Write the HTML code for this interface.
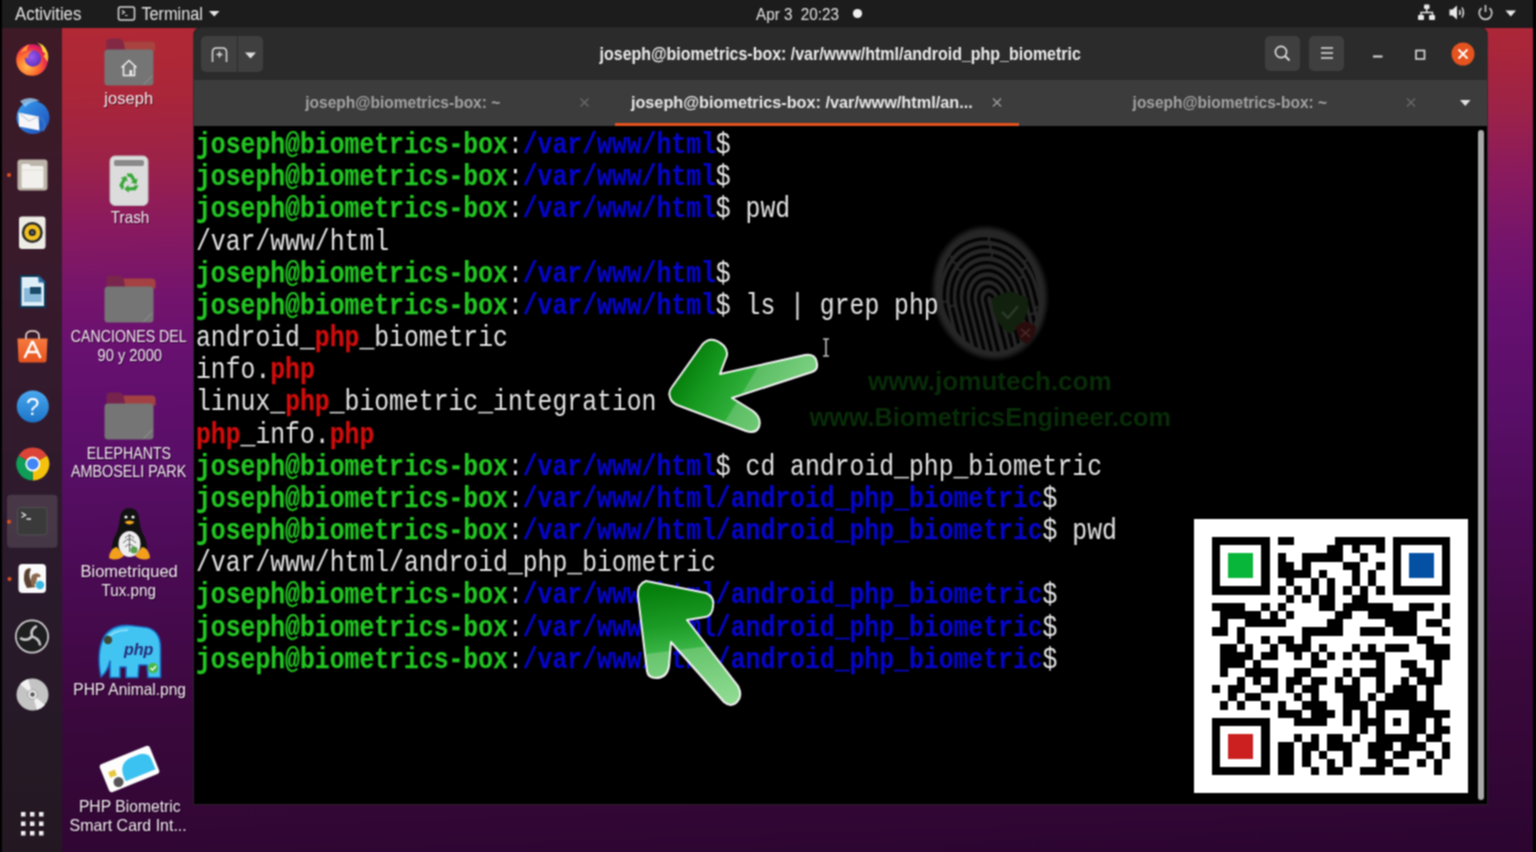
<!DOCTYPE html>
<html><head><meta charset="utf-8">
<style>
*{margin:0;padding:0;box-sizing:border-box}
html,body{width:1536px;height:852px;overflow:hidden;background:#000}
body{position:relative;font-family:"Liberation Sans",sans-serif}
.abs{position:absolute}
svg{position:absolute;overflow:visible}
#wall{position:absolute;left:2px;top:0;width:1531px;height:852px;
 background:linear-gradient(178deg,#b42a32 0%,#aa2639 11%,#9c2248 18%,#8a1a5e 25%,#74146c 33%,#661070 40%,#580e66 52%,#480a50 66%,#3a083c 80%,#2c0530 100%)}
#top{position:absolute;left:2px;top:0;width:1531px;height:28px;background:#1c1c1c}
#dock{position:absolute;left:2px;top:28px;width:60px;height:824px;background:linear-gradient(180deg,#3e1a26 0%,#361a2c 35%,#2a1a2c 65%,#231822 100%)}
#win{position:absolute;left:194px;top:28px;width:1293px;height:776px;background:#000;border-radius:7px 7px 0 0;overflow:hidden;box-shadow:0 0 0 1px rgba(40,40,40,.8)}
#hdr{position:absolute;left:0;top:0;width:100%;height:52px;background:#2b2b2b}
#tabs{position:absolute;left:0;top:52px;width:100%;height:46px;background:#3c3c3c}
#term{position:absolute;left:0;top:98px;width:100%;height:678px;background:#000;overflow:hidden}
.ln{position:absolute;left:2px;white-space:pre;font-family:"Liberation Mono",monospace;font-size:30px;transform:scaleX(0.825);transform-origin:0 0;color:#e4e4e4;line-height:32px}
.g{color:#22c422;font-weight:bold;-webkit-text-stroke:0.25px #22c422}
.b{color:#0505c8;font-weight:bold;-webkit-text-stroke:0.25px #0505c8}
.r{color:#d00c0c;font-weight:bold;-webkit-text-stroke:0.25px #d00c0c}
.btn{position:absolute;background:#3f3f3f;border-radius:5px}
</style></head><body>
<svg width="0" height="0" style="position:absolute"><filter id="softb" x="0" y="0" width="100%" height="100%" color-interpolation-filters="sRGB"><feConvolveMatrix order="3" kernelMatrix="1 2 1 2 4 2 1 2 1" divisor="16" edgeMode="duplicate"/></filter></svg>
<div id="root" style="position:absolute;left:0;top:0;width:1536px;height:852px;filter:url(#softb)">
<div id="wall"></div>
<div id="top"></div>
<div id="dock"></div>
<div id="win">
  <div id="hdr">
    <div class="btn" style="left:7px;top:8px;width:36px;height:36px;border-radius:5px 0 0 5px"></div>
    <div class="btn" style="left:44px;top:8px;width:25px;height:36px;border-radius:0 5px 5px 0"></div>
    <div class="btn" style="left:1071px;top:8px;width:35px;height:35px"></div>
    <div class="btn" style="left:1115px;top:8px;width:35px;height:35px"></div>
  </div>
  <div id="tabs">
    <div class="abs" style="left:421px;top:43px;width:404px;height:3px;background:#e5531f"></div>
  </div>
  <div id="term">
    <svg style="left:0;top:0" width="1293" height="678"><g transform="translate(-194 -126)"><defs><filter id="fpb" x="-20%" y="-20%" width="140%" height="140%"><feGaussianBlur stdDeviation="2"/></filter><clipPath id="fpc"><ellipse cx="990" cy="293" rx="48" ry="59" transform="rotate(-14 990 293)"/></clipPath></defs><ellipse cx="990" cy="293" rx="56" ry="66" transform="rotate(-14 990 293)" fill="#262626" filter="url(#fpb)"/><g clip-path="url(#fpc)"><g transform="rotate(-14 990 293)" stroke="#040404" stroke-width="3.4" fill="none" stroke-linecap="round"><path d="M984.0 370.0 L984.0 300.0 A4.0 6.0 0 0 1 992.0 300.0 L992.0 370.0"/><path d="M977.2 370.0 L977.2 300.0 A10.8 14.0 0 0 1 998.8 300.0 L998.8 370.0"/><path d="M970.4 370.0 L970.4 300.0 A17.6 22.0 0 0 1 1005.6 300.0 L1005.6 370.0"/><path d="M963.6 370.0 L963.6 300.0 A24.4 30.0 0 0 1 1012.4 300.0 L1012.4 370.0"/><path d="M956.8 370.0 L956.8 300.0 A31.2 38.0 0 0 1 1019.2 300.0 L1019.2 370.0"/><path d="M950.0 370.0 L950.0 300.0 A38.0 46.0 0 0 1 1026.0 300.0 L1026.0 370.0" stroke-dasharray="33 5"/><path d="M943.2 370.0 L943.2 300.0 A44.8 54.0 0 0 1 1032.8 300.0 L1032.8 370.0" stroke-dasharray="36 5"/><path d="M936.4 370.0 L936.4 300.0 A51.6 62.0 0 0 1 1039.6 300.0 L1039.6 370.0" stroke-dasharray="39 5"/></g></g><path d="M992 298 L1010 291 L1028 298 Q1030 322 1010 334 Q992 322 992 298z" fill="#12200e"/><path d="M1002 312l6 6 10-12" stroke="#2a3a28" stroke-width="2.5" fill="none"/><path d="M1016 326 L1026 321 L1036 326 Q1036 338 1026 344 Q1016 338 1016 326z" fill="#2a0c0c"/><path d="M1021 329l9 8M1030 329l-9 8" stroke="#4a2a2a" stroke-width="1.6"/></g></svg>
    <div class="ln" style="top:3.00px"><span class="g">joseph@biometrics-box</span>:<span class="b">/var/www/html</span>$</div><div class="ln" style="top:35.17px"><span class="g">joseph@biometrics-box</span>:<span class="b">/var/www/html</span>$</div><div class="ln" style="top:67.34px"><span class="g">joseph@biometrics-box</span>:<span class="b">/var/www/html</span>$ pwd</div><div class="ln" style="top:99.51px">/var/www/html</div><div class="ln" style="top:131.68px"><span class="g">joseph@biometrics-box</span>:<span class="b">/var/www/html</span>$</div><div class="ln" style="top:163.85px"><span class="g">joseph@biometrics-box</span>:<span class="b">/var/www/html</span>$ ls | grep php</div><div class="ln" style="top:196.02px">android_<span class="r">php</span>_biometric</div><div class="ln" style="top:228.19px">info.<span class="r">php</span></div><div class="ln" style="top:260.36px">linux_<span class="r">php</span>_biometric_integration</div><div class="ln" style="top:292.53px"><span class="r">php</span>_info.<span class="r">php</span></div><div class="ln" style="top:324.70px"><span class="g">joseph@biometrics-box</span>:<span class="b">/var/www/html</span>$ cd android_php_biometric</div><div class="ln" style="top:356.87px"><span class="g">joseph@biometrics-box</span>:<span class="b">/var/www/html/android_php_biometric</span>$</div><div class="ln" style="top:389.04px"><span class="g">joseph@biometrics-box</span>:<span class="b">/var/www/html/android_php_biometric</span>$ pwd</div><div class="ln" style="top:421.21px">/var/www/html/android_php_biometric</div><div class="ln" style="top:453.38px"><span class="g">joseph@biometrics-box</span>:<span class="b">/var/www/html/android_php_biometric</span>$</div><div class="ln" style="top:485.55px"><span class="g">joseph@biometrics-box</span>:<span class="b">/var/www/html/android_php_biometric</span>$</div><div class="ln" style="top:517.72px"><span class="g">joseph@biometrics-box</span>:<span class="b">/var/www/html/android_php_biometric</span>$</div>
    <div class="abs" style="left:1284px;top:4px;width:6px;height:670px;border-radius:3px;background:#a8a8a8"></div>
  </div>
</div>
<svg style="left:0;top:0" width="1536" height="852" viewBox="0 0 1536 852">
<defs>
 <linearGradient id="ag1" x1="0" y1="1" x2="1" y2="0"><stop offset="0" stop-color="#0a8a12"/><stop offset="0.55" stop-color="#2aa838"/><stop offset="0.56" stop-color="#6cc878"/><stop offset="1" stop-color="#8ad890"/></linearGradient>
</defs>
<!-- topbar icons -->
<rect x="118.5" y="7" width="16" height="13" rx="2" fill="none" stroke="#d8d8d8" stroke-width="1.5"/>
<path d="M122 10.5l2.5 1.8-2.5 1.8M125 15.5h2.5" stroke="#d8d8d8" stroke-width="1.2" fill="none"/>
<path d="M209 11h10.5l-5.25 5.5z" fill="#e6e6e6"/>
<circle cx="857.5" cy="13.5" r="4.6" fill="#f0f0f0"/>
<rect x="1424" y="4.5" width="5.5" height="4.5" rx="1" fill="#e8e8e8"/><rect x="1418" y="15" width="6" height="5" rx="1" fill="#e8e8e8"/><rect x="1429" y="15" width="6" height="5" rx="1" fill="#e8e8e8"/><path d="M1426.7 9v3.5M1421 15v-2.5h11.5V15" stroke="#e8e8e8" stroke-width="1.4" fill="none"/>
<path d="M1449.5 9.5h3l4.5-4v14l-4.5-4h-3z" fill="#e8e8e8"/><path d="M1459.5 10q1.3 2.5 0 5M1462 7.5q2.8 5 0 10" stroke="#e8e8e8" stroke-width="1.4" fill="none"/>
<path d="M1481.5 8.2a6.3 6.3 0 1 0 8 0" stroke="#d0d0d0" stroke-width="1.6" fill="none"/><path d="M1485.5 5v7" stroke="#d0d0d0" stroke-width="1.6"/>
<path d="M1505.5 10.5h10.5l-5.25 6z" fill="#e8e8e8"/>
<!-- header icons -->
<path d="M212.5 62V52q0-4 4-4h6q4 0 4 4v10" stroke="#dcdcdc" stroke-width="1.5" fill="none"/><path d="M219.5 51.5v6M216.5 54.5h6" stroke="#dcdcdc" stroke-width="1.5"/>
<path d="M245 52.5h11l-5.5 6z" fill="#e0e0e0"/>
<circle cx="1281" cy="52" r="5.6" stroke="#e0e0e0" stroke-width="1.6" fill="none"/><path d="M1285 56l4.5 4.5" stroke="#e0e0e0" stroke-width="1.8"/>
<path d="M1321 48h12M1321 53h12M1321 58h12" stroke="#e0e0e0" stroke-width="1.7"/>
<path d="M1373 56.5h9.5" stroke="#dcdcdc" stroke-width="2"/>
<rect x="1416" y="50.5" width="8.5" height="8.5" fill="none" stroke="#dcdcdc" stroke-width="1.6"/>
<circle cx="1463" cy="54" r="11.5" fill="#e5531f"/>
<path d="M1458.5 49.5l9 9M1467.5 49.5l-9 9" stroke="#fff" stroke-width="1.8"/>
<!-- tab x -->
<path d="M580.5 98.5l8 8M588.5 98.5l-8 8" stroke="#6a6a6a" stroke-width="1.3"/>
<path d="M993 98.5l8 8M1001 98.5l-8 8" stroke="#a0a0a0" stroke-width="1.3"/>
<path d="M1407 98.5l8 8M1415 98.5l-8 8" stroke="#6a6a6a" stroke-width="1.3"/>
<path d="M1460 100h10.5l-5.25 6z" fill="#e0e0e0"/>

<defs>
 <radialGradient id="ffg" cx="0.35" cy="0.7" r="0.8"><stop offset="0" stop-color="#ffbd4f"/><stop offset="0.45" stop-color="#ff6a2a"/><stop offset="0.8" stop-color="#e3205a"/><stop offset="1" stop-color="#c0146e"/></radialGradient>
 <radialGradient id="ffp" cx="0.4" cy="0.4" r="0.7"><stop offset="0" stop-color="#9a5cf0"/><stop offset="1" stop-color="#5a2ab8"/></radialGradient>
 <linearGradient id="tbg" x1="0" y1="0" x2="1" y2="1"><stop offset="0" stop-color="#3aa0f0"/><stop offset="1" stop-color="#1a4ab8"/></linearGradient>
 <linearGradient id="swg" x1="0" y1="0" x2="0" y2="1"><stop offset="0" stop-color="#f6793e"/><stop offset="1" stop-color="#e5531f"/></linearGradient>
 <linearGradient id="hlp" x1="0" y1="0" x2="0" y2="1"><stop offset="0" stop-color="#4aa8ee"/><stop offset="1" stop-color="#1c74c8"/></linearGradient>
 <radialGradient id="dvd" cx="0.5" cy="0.5" r="0.5"><stop offset="0" stop-color="#f4f4f4"/><stop offset="0.5" stop-color="#c8c8c8"/><stop offset="0.8" stop-color="#e0e0e0"/><stop offset="1" stop-color="#9a9a9a"/></radialGradient>
</defs>
<!-- firefox -->
<circle cx="32" cy="60" r="15.8" fill="url(#ffg)"/>
<path d="M37 42.5q11 3 11.5 16q-2-5-6-7q0-5-5.5-9z" fill="#ffd23a"/>
<path d="M46.5 52q2.5 5 1 10l-4-6z" fill="#ffb43a"/>
<circle cx="33" cy="58.5" r="8.2" fill="url(#ffp)"/>
<path d="M20.5 53q3-7 9-8.5q-3 3-2.5 6q-3 0-6.5 2.5z" fill="#ff9a2e"/>
<path d="M23 57q3-6 10-6.5q-5 2.5-5 8z" fill="#ff7a30" opacity="0.9"/>
<!-- thunderbird -->
<circle cx="33" cy="117.5" r="16.5" fill="url(#tbg)"/>
<path d="M20 101q10-6 20 0q-9-1-15 6z" fill="#9ad0f8" opacity="0.8"/>
<path d="M18.5 112.5 L38.5 116.5 L39.5 130.5 L19 126.5z" fill="#f6f6f8"/>
<path d="M19 113l10 8 9.5-4.5" stroke="#c8ccd4" stroke-width="1.1" fill="none"/>
<path d="M39.5 117 q8 6 3 14" stroke="#3a78c8" stroke-width="3" fill="none" opacity="0.7"/>
<!-- files -->
<rect x="17.5" y="159.5" width="30" height="31" rx="3" fill="#bcb5aa"/>
<path d="M21.5 168v-2.5q0-1.5 1.5-1.5h6l2 2h11q1.5 0 1.5 1.5v19q0 1.5-1.5 1.5h-19q-1.5 0-1.5-1.5z" fill="#f2f0ec"/>
<path d="M21.5 170h22" stroke="#e0ddd6" stroke-width="1"/>
<circle cx="9" cy="175" r="2" fill="#e5531f"/>
<!-- rhythmbox -->
<rect x="19" y="216.5" width="26.5" height="32.5" rx="3" fill="#ecebe4"/>
<circle cx="32.3" cy="232.5" r="10.5" fill="#2a2a2a"/>
<circle cx="32.3" cy="232.5" r="8" fill="#f0c020"/>
<circle cx="32.3" cy="232.5" r="3.6" fill="#2a2a2a"/>
<circle cx="32.3" cy="232.5" r="1.2" fill="#777"/>
<!-- libreoffice -->
<path d="M19.5 275h19l7.5 7.5V308h-26.5z" fill="#0a3a5a"/>
<path d="M21.5 277h16l6.5 6.5V306h-22.5z" fill="#ddeef8"/>
<rect x="24" y="288" width="17.5" height="14" fill="#8ab8d8"/>
<rect x="30" y="287" width="11" height="7" fill="#1a4a6a"/>
<path d="M38.5 275l7.5 7.5h-7.5z" fill="#2a6aa0"/>
<!-- software -->
<path d="M17.5 338.5h30l-1 21.5q0 2.5-2.5 2.5h-23q-2.5 0-2.5-2.5z" fill="url(#swg)"/>
<path d="M26 339v-3q0-5 6.5-5t6.5 5v3" stroke="#f2dcd0" stroke-width="1.6" fill="none"/>
<path d="M32.5 341l-8 17M32.5 341l8 17M26.5 352h12" stroke="#fff" stroke-width="2.4" fill="none"/>
<!-- help -->
<circle cx="32.8" cy="406.4" r="16" fill="url(#hlp)"/>
<text x="32.8" y="415" text-anchor="middle" font-family="Liberation Sans" font-size="24" fill="#fff">?</text>
<!-- chrome -->
<path d="M32.8 464L18.51 455.75A16.5 16.5 0 0 1 47.09 455.75z" fill="#db4437"/><path d="M32.8 464L47.09 455.75A16.5 16.5 0 0 1 32.80 480.50z" fill="#f4c20d"/><path d="M32.8 464L32.80 480.50A16.5 16.5 0 0 1 18.51 455.75z" fill="#0f9d58"/><circle cx="32.8" cy="464" r="7.4" fill="#fff"/><circle cx="32.8" cy="464" r="5.8" fill="#4285f4"/>
<!-- terminal (active) -->
<rect x="7" y="494.7" width="50.5" height="53" rx="4" fill="rgba(255,255,255,0.13)"/>
<rect x="17.5" y="507.5" width="29.5" height="27.5" rx="3" fill="#3a3a3a" stroke="#555" stroke-width="0.8"/>
<path d="M21.5 512.5l4 2.5-4 2.5M26.5 519h4.5" stroke="#e8e8e8" stroke-width="1.4" fill="none"/>
<circle cx="9" cy="521.7" r="2" fill="#e5531f"/>
<!-- squirrel app -->
<rect x="18.5" y="564" width="27.5" height="29" rx="4" fill="#fafafa"/>
<path d="M27 588q-5-8-2-17q3-4 6-2q-3 6 0 12q2 4 5 6z" fill="#5a4030"/>
<path d="M32 575q6-4 9 1q-2 2-4 1q0 6-4 10q-4-4-1-12z" fill="#8a6a50"/>
<circle cx="40" cy="585" r="4.2" fill="#3ab8e0"/>
<circle cx="9.5" cy="579" r="2" fill="#e5531f"/>
<!-- obs -->
<circle cx="32" cy="636.5" r="17" fill="#d0d0d0"/>
<circle cx="32" cy="636.5" r="15.3" fill="#1e1d20"/>
<g stroke="#c8c8c8" stroke-width="2.6" fill="none" stroke-linecap="round">
<path d="M32 636.5 q-2-7 4-10"/>
<path d="M32 636.5 q7 2 8 8"/>
<path d="M32 636.5 q-5 5-11 2"/>
</g>
<!-- dvd -->
<circle cx="32.5" cy="694.5" r="16" fill="#c4c4c4"/>
<path d="M32.5 694.5 L20 684 A16 16 0 0 1 28 679 z M32.5 694.5 L45 705 A16 16 0 0 1 37 710z" fill="#f2f2f2"/>
<circle cx="32.5" cy="694.5" r="4.8" fill="#eee" stroke="#999" stroke-width="1"/>
<circle cx="32.5" cy="694.5" r="2.2" fill="#555"/>
<!-- grid -->
<g fill="#f0f0f0">
<rect x="21" y="812" width="4.5" height="4.5"/><rect x="30" y="812" width="4.5" height="4.5"/><rect x="39" y="812" width="4.5" height="4.5"/>
<rect x="21" y="821.5" width="4.5" height="4.5"/><rect x="30" y="821.5" width="4.5" height="4.5"/><rect x="39" y="821.5" width="4.5" height="4.5"/>
<rect x="21" y="831" width="4.5" height="4.5"/><rect x="30" y="831" width="4.5" height="4.5"/><rect x="39" y="831" width="4.5" height="4.5"/>
</g>

<path d="M106.4 42.6q0-4 4-4h10l3 3h28q4 0 4 4v6h-49z" fill="#7a2848" opacity="0.85"/>
<path d="M123.4 41.6h28q4 0 4 4v6h-30z" fill="#c85a3a" opacity="0.55"/>
<rect x="104.4" y="49.6" width="49" height="36" rx="3.5" fill="#757575"/>
<path d="M143.4 84.6l9 -9" stroke="#8a8a8a" stroke-width="1.2"/>
<path d="M121.5 67.5l7.5-7 7.5 7M123.5 66v9.5h11V66" stroke="#eee" stroke-width="1.6" fill="none"/><rect x="129.5" y="70" width="2.6" height="5.5" fill="#eee"/>
<!-- trash -->
<rect x="110" y="156" width="38" height="49.5" rx="5" fill="#dcdcdc"/>
<rect x="110" y="156" width="38" height="49.5" rx="5" fill="none" stroke="#bdbdbd" stroke-width="1"/>
<rect x="114" y="160" width="30" height="6" rx="2" fill="#8a8a8a"/>
<g transform="translate(129 183)" fill="#38a838"><path d="M-2.5 -9.5 L3 -9.5 L6.5 -3.5 L8.5 -4.8 L7.5 1.2 L1.8 -0.5 L3.8 -1.7 L1.2 -6 L-0.8 -6 z"/><g transform="rotate(120)"><path d="M-2.5 -9.5 L3 -9.5 L6.5 -3.5 L8.5 -4.8 L7.5 1.2 L1.8 -0.5 L3.8 -1.7 L1.2 -6 L-0.8 -6 z"/></g><g transform="rotate(240)"><path d="M-2.5 -9.5 L3 -9.5 L6.5 -3.5 L8.5 -4.8 L7.5 1.2 L1.8 -0.5 L3.8 -1.7 L1.2 -6 L-0.8 -6 z"/></g></g>
<path d="M106.5 279.6q0-4 4-4h10l3 3h28q4 0 4 4v6h-49z" fill="#7a2848" opacity="0.85"/>
<path d="M123.5 278.6h28q4 0 4 4v6h-30z" fill="#c85a3a" opacity="0.55"/>
<rect x="104.5" y="286.6" width="49" height="36" rx="3.5" fill="#757575"/>
<path d="M143.5 321.6l9 -9" stroke="#8a8a8a" stroke-width="1.2"/><path d="M106.5 396.5q0-4 4-4h10l3 3h28q4 0 4 4v6h-49z" fill="#7a2848" opacity="0.85"/>
<path d="M123.5 395.5h28q4 0 4 4v6h-30z" fill="#c85a3a" opacity="0.55"/>
<rect x="104.5" y="403.5" width="49" height="36" rx="3.5" fill="#757575"/>
<path d="M143.5 438.5l9 -9" stroke="#8a8a8a" stroke-width="1.2"/>
<!-- tux -->
<path d="M129.5 508 Q121 508 120 518 Q119 526 117 532 Q111 542 112 552 L147 552 Q148 542 142 532 Q140 526 139 518 Q138 508 129.5 508z" fill="#111"/>
<ellipse cx="129.5" cy="544" rx="11" ry="13" fill="#eeeeee"/>
<circle cx="126" cy="517" r="1.6" fill="#fff"/><circle cx="133" cy="517" r="1.6" fill="#fff"/>
<path d="M124.5 522 Q129.5 519 134.5 522 Q129.5 527 124.5 522z" fill="#f2a81c"/>
<path d="M109 558 Q110 548 117 547 L124 556 Q116 562 109 558z" fill="#f2a01c"/>
<path d="M150 558 Q149 548 142 547 L135 556 Q143 562 150 558z" fill="#f2a01c"/>
<g stroke="#555" stroke-width="0.9" fill="none"><path d="M125 538q4.5-5 9 0"/><path d="M123 543q6.5-8 13 0"/><path d="M125 547q4.5-5 9 0"/><path d="M129.5 534v18"/></g>
<circle cx="134" cy="550" r="3.6" fill="#58a050"/>
<!-- php elephant -->
<path d="M101 677 Q96 652 104 637 Q112 624 130 625.5 L147 627.5 Q160.5 631 160.5 648 L160.5 677.5 L148 677.5 L147 665 L139 665 L138 677.5 L126 677.5 L126 667 L120 667 L120 677.5 L110 677.5 L110 661 Q108 671 101 677z" fill="#42c4f2" stroke="#1a68c0" stroke-width="1.6" stroke-linejoin="round"/>
<path d="M106 640 Q112 630 128 630" stroke="#a8e8ff" stroke-width="2" fill="none" opacity="0.7"/>
<text x="124" y="655" font-family="Liberation Sans" font-size="16" font-weight="bold" font-style="italic" fill="#262a78">php</text>
<circle cx="108" cy="640" r="4.2" fill="#3e4a38"/>
<circle cx="153" cy="668" r="5.2" fill="#4ab848"/>
<path d="M150.5 668l2 2 3.5-4" stroke="#fff" stroke-width="1.3" fill="none"/>
<!-- smart card -->
<g transform="translate(129.5 769) rotate(-22)">
<rect x="-27" y="-15" width="54" height="30" rx="3" fill="#fdfdfd"/>
<rect x="-21" y="-5" width="7" height="6" fill="#e6c840"/>
<circle cx="-15" cy="8" r="5" fill="#555"/>
<path d="M-8 10q-2-18 12-20h10q10 1 10 10v10h-32z" fill="#3cc2f0"/>
</g>

<text x="15" y="20" textLength="66.4" lengthAdjust="spacingAndGlyphs" font-family="Liberation Sans" font-size="18" font-weight="normal" fill="#e4e4e4" >Activities</text><text x="141.4" y="20" textLength="61.6" lengthAdjust="spacingAndGlyphs" font-family="Liberation Sans" font-size="18" font-weight="normal" fill="#e4e4e4" >Terminal</text><text x="756" y="19.5" textLength="83" lengthAdjust="spacingAndGlyphs" font-family="Liberation Sans" font-size="17" font-weight="normal" fill="#e4e4e4" xml:space="preserve">Apr 3  20:23</text><text x="599.6" y="60" textLength="481.2" lengthAdjust="spacingAndGlyphs" font-family="Liberation Sans" font-size="17.5" font-weight="bold" fill="#ececec" >joseph@biometrics-box: /var/www/html/android_php_biometric</text><text x="305.3" y="108.4" textLength="195" lengthAdjust="spacingAndGlyphs" font-family="Liberation Sans" font-size="17" font-weight="bold" fill="#a3a3a3" >joseph@biometrics-box: ~</text><text x="630.9" y="108.4" textLength="341.8" lengthAdjust="spacingAndGlyphs" font-family="Liberation Sans" font-size="17" font-weight="bold" fill="#e8e8e8" >joseph@biometrics-box: /var/www/html/an...</text><text x="1132.6" y="108.4" textLength="194.4" lengthAdjust="spacingAndGlyphs" font-family="Liberation Sans" font-size="17" font-weight="bold" fill="#a3a3a3" >joseph@biometrics-box: ~</text><text x="105.3" y="105.4" textLength="48.8" lengthAdjust="spacingAndGlyphs" font-family="Liberation Sans" font-size="16.5" font-weight="normal" fill="rgba(0,0,0,0.55)" >joseph</text><text x="104.3" y="104.4" textLength="48.8" lengthAdjust="spacingAndGlyphs" font-family="Liberation Sans" font-size="16.5" font-weight="normal" fill="#f4ecf2" >joseph</text><text x="111.8" y="224.3" textLength="38.60000000000001" lengthAdjust="spacingAndGlyphs" font-family="Liberation Sans" font-size="16.5" font-weight="normal" fill="rgba(0,0,0,0.55)" >Trash</text><text x="110.8" y="223.3" textLength="38.60000000000001" lengthAdjust="spacingAndGlyphs" font-family="Liberation Sans" font-size="16.5" font-weight="normal" fill="#f4ecf2" >Trash</text><text x="71.8" y="342.5" textLength="115.89999999999999" lengthAdjust="spacingAndGlyphs" font-family="Liberation Sans" font-size="16.5" font-weight="normal" fill="rgba(0,0,0,0.55)" >CANCIONES DEL</text><text x="70.8" y="341.5" textLength="115.89999999999999" lengthAdjust="spacingAndGlyphs" font-family="Liberation Sans" font-size="16.5" font-weight="normal" fill="#f4ecf2" >CANCIONES DEL</text><text x="98.5" y="361.5" textLength="64.5" lengthAdjust="spacingAndGlyphs" font-family="Liberation Sans" font-size="16.5" font-weight="normal" fill="rgba(0,0,0,0.55)" >90 y 2000</text><text x="97.5" y="360.5" textLength="64.5" lengthAdjust="spacingAndGlyphs" font-family="Liberation Sans" font-size="16.5" font-weight="normal" fill="#f4ecf2" >90 y 2000</text><text x="87.8" y="459.5" textLength="84.2" lengthAdjust="spacingAndGlyphs" font-family="Liberation Sans" font-size="16.5" font-weight="normal" fill="rgba(0,0,0,0.55)" >ELEPHANTS</text><text x="86.8" y="458.5" textLength="84.2" lengthAdjust="spacingAndGlyphs" font-family="Liberation Sans" font-size="16.5" font-weight="normal" fill="#f4ecf2" >ELEPHANTS</text><text x="71.9" y="478" textLength="115.4" lengthAdjust="spacingAndGlyphs" font-family="Liberation Sans" font-size="16.5" font-weight="normal" fill="rgba(0,0,0,0.55)" >AMBOSELI PARK</text><text x="70.9" y="477" textLength="115.4" lengthAdjust="spacingAndGlyphs" font-family="Liberation Sans" font-size="16.5" font-weight="normal" fill="#f4ecf2" >AMBOSELI PARK</text><text x="81.5" y="578" textLength="97.30000000000001" lengthAdjust="spacingAndGlyphs" font-family="Liberation Sans" font-size="16.5" font-weight="normal" fill="rgba(0,0,0,0.55)" >Biometriqued</text><text x="80.5" y="577" textLength="97.30000000000001" lengthAdjust="spacingAndGlyphs" font-family="Liberation Sans" font-size="16.5" font-weight="normal" fill="#f4ecf2" >Biometriqued</text><text x="102.5" y="596.5" textLength="54.5" lengthAdjust="spacingAndGlyphs" font-family="Liberation Sans" font-size="16.5" font-weight="normal" fill="rgba(0,0,0,0.55)" >Tux.png</text><text x="101.5" y="595.5" textLength="54.5" lengthAdjust="spacingAndGlyphs" font-family="Liberation Sans" font-size="16.5" font-weight="normal" fill="#f4ecf2" >Tux.png</text><text x="74.3" y="695.6" textLength="112.60000000000001" lengthAdjust="spacingAndGlyphs" font-family="Liberation Sans" font-size="16.5" font-weight="normal" fill="rgba(0,0,0,0.55)" >PHP Animal.png</text><text x="73.3" y="694.6" textLength="112.60000000000001" lengthAdjust="spacingAndGlyphs" font-family="Liberation Sans" font-size="16.5" font-weight="normal" fill="#f4ecf2" >PHP Animal.png</text><text x="79.9" y="813" textLength="101.69999999999999" lengthAdjust="spacingAndGlyphs" font-family="Liberation Sans" font-size="16.5" font-weight="normal" fill="rgba(0,0,0,0.55)" >PHP Biometric</text><text x="78.9" y="812" textLength="101.69999999999999" lengthAdjust="spacingAndGlyphs" font-family="Liberation Sans" font-size="16.5" font-weight="normal" fill="#f4ecf2" >PHP Biometric</text><text x="70.6" y="831.9" textLength="117.1" lengthAdjust="spacingAndGlyphs" font-family="Liberation Sans" font-size="16.5" font-weight="normal" fill="rgba(0,0,0,0.55)" >Smart Card Int...</text><text x="69.6" y="830.9" textLength="117.1" lengthAdjust="spacingAndGlyphs" font-family="Liberation Sans" font-size="16.5" font-weight="normal" fill="#f4ecf2" >Smart Card Int...</text><text x="868" y="390.2" textLength="243.7" lengthAdjust="spacingAndGlyphs" font-family="Liberation Sans" font-size="25" font-weight="bold" fill="#082c08" >www.jomutech.com</text><text x="809.4" y="425.6" textLength="361.6" lengthAdjust="spacingAndGlyphs" font-family="Liberation Sans" font-size="25" font-weight="bold" fill="#082c08" >www.BiometricsEngineer.com</text>
<path d="M823 339h6M826 339v17M823 356h6" stroke="#bbb" stroke-width="1.6" fill="none"/>

<defs>
 <linearGradient id="ga1" gradientUnits="userSpaceOnUse" x1="680" y1="375" x2="800" y2="448"><stop offset="0" stop-color="#067f0c"/><stop offset="0.2" stop-color="#179a20"/><stop offset="0.44" stop-color="#2fae3a"/><stop offset="0.45" stop-color="#5abd62"/><stop offset="1" stop-color="#8fdb92"/></linearGradient>
 <linearGradient id="ga2" gradientUnits="userSpaceOnUse" x1="650" y1="590" x2="665" y2="709"><stop offset="0" stop-color="#067f0c"/><stop offset="0.3" stop-color="#1a9a24"/><stop offset="0.52" stop-color="#38b444"/><stop offset="0.53" stop-color="#66c46c"/><stop offset="1" stop-color="#8fdb92"/></linearGradient>
 <linearGradient id="ga2b" gradientUnits="userSpaceOnUse" x1="640" y1="600" x2="740" y2="620"><stop offset="0" stop-color="#000" stop-opacity="0.12"/><stop offset="1" stop-color="#fff" stop-opacity="0.08"/></linearGradient>
</defs>
<path d="M670 397 Q668 392 672 387 L702 345 Q711 334 724 346 Q729 352 726 358 L720 374 L805 355 Q816 353 817 364 Q818 370 812 372 L732 398 L753 411 Q762 418 759 427 Q756 434 746 431 L677 405 Q671 402 670 397z" fill="url(#ga1)" stroke="#f2f2f2" stroke-width="2" stroke-linejoin="round"/>
<path d="M638 596 Q637 584 646 581 L706 593 Q715 597 713 607 Q712 616 705 617 L687 620 L738 686 Q743 696 737 702 Q731 708 724 702 L671 642 L669 666 Q667 678 656 678 Q648 678 647 671 L638 596z" fill="url(#ga2)" stroke="#f2f2f2" stroke-width="2" stroke-linejoin="round"/>

</svg>
<div class="abs" style="left:1194px;top:519px;width:274px;height:274px;background:#fff"></div>
<svg style="left:1211.5px;top:536.7px" width="238.3" height="238.3" viewBox="0 0 29 29" shape-rendering="crispEdges"><path d="M0 0h7v1h-7zM8 0h2v1h-2zM15 0h6v1h-6zM22 0h7v1h-7zM0 1h1v1h-1zM6 1h1v1h-1zM14 1h2v1h-2zM17 1h1v1h-1zM20 1h1v1h-1zM22 1h1v1h-1zM28 1h1v1h-1zM0 2h1v1h-1zM2 2h3v1h-3zM6 2h1v1h-1zM8 2h1v1h-1zM11 2h5v1h-5zM18 2h1v1h-1zM22 2h1v1h-1zM24 2h3v1h-3zM28 2h1v1h-1zM0 3h1v1h-1zM2 3h3v1h-3zM6 3h1v1h-1zM8 3h2v1h-2zM11 3h1v1h-1zM16 3h2v1h-2zM20 3h1v1h-1zM22 3h1v1h-1zM24 3h3v1h-3zM28 3h1v1h-1zM0 4h1v1h-1zM2 4h3v1h-3zM6 4h1v1h-1zM8 4h4v1h-4zM13 4h1v1h-1zM17 4h1v1h-1zM19 4h1v1h-1zM22 4h1v1h-1zM24 4h3v1h-3zM28 4h1v1h-1zM0 5h1v1h-1zM6 5h1v1h-1zM9 5h1v1h-1zM12 5h1v1h-1zM14 5h1v1h-1zM17 5h1v1h-1zM19 5h1v1h-1zM22 5h1v1h-1zM28 5h1v1h-1zM0 6h7v1h-7zM8 6h1v1h-1zM10 6h1v1h-1zM12 6h1v1h-1zM14 6h1v1h-1zM16 6h1v1h-1zM18 6h1v1h-1zM20 6h1v1h-1zM22 6h7v1h-7zM9 7h1v1h-1zM11 7h1v1h-1zM13 7h2v1h-2zM17 7h2v1h-2zM0 8h4v1h-4zM6 8h1v1h-1zM8 8h1v1h-1zM13 8h2v1h-2zM16 8h6v1h-6zM24 8h3v1h-3zM28 8h1v1h-1zM1 9h5v1h-5zM7 9h1v1h-1zM9 9h1v1h-1zM15 9h2v1h-2zM19 9h6v1h-6zM28 9h1v1h-1zM1 10h1v1h-1zM4 10h5v1h-5zM14 10h2v1h-2zM21 10h4v1h-4zM26 10h2v1h-2zM0 11h2v1h-2zM3 11h1v1h-1zM11 11h5v1h-5zM18 11h3v1h-3zM22 11h3v1h-3zM28 11h1v1h-1zM3 12h1v1h-1zM6 12h1v1h-1zM8 12h2v1h-2zM11 12h1v1h-1zM25 12h2v1h-2zM1 13h2v1h-2zM4 13h1v1h-1zM7 13h1v1h-1zM9 13h3v1h-3zM13 13h1v1h-1zM17 13h1v1h-1zM19 13h1v1h-1zM21 13h3v1h-3zM26 13h3v1h-3zM1 14h4v1h-4zM6 14h2v1h-2zM10 14h1v1h-1zM12 14h1v1h-1zM14 14h1v1h-1zM16 14h1v1h-1zM18 14h3v1h-3zM26 14h3v1h-3zM1 15h3v1h-3zM5 15h1v1h-1zM12 15h2v1h-2zM20 15h1v1h-1zM23 15h2v1h-2zM27 15h1v1h-1zM1 16h1v1h-1zM4 16h4v1h-4zM10 16h2v1h-2zM16 16h1v1h-1zM18 16h3v1h-3zM24 16h2v1h-2zM27 16h1v1h-1zM3 17h1v1h-1zM5 17h1v1h-1zM7 17h1v1h-1zM9 17h2v1h-2zM12 17h2v1h-2zM15 17h1v1h-1zM17 17h1v1h-1zM20 17h1v1h-1zM23 17h1v1h-1zM25 17h3v1h-3zM0 18h1v1h-1zM2 18h2v1h-2zM6 18h2v1h-2zM9 18h1v1h-1zM11 18h2v1h-2zM15 18h3v1h-3zM20 18h1v1h-1zM22 18h3v1h-3zM26 18h1v1h-1zM2 19h1v1h-1zM4 19h2v1h-2zM10 19h1v1h-1zM12 19h1v1h-1zM16 19h2v1h-2zM19 19h1v1h-1zM21 19h4v1h-4zM26 19h1v1h-1zM1 20h1v1h-1zM3 20h1v1h-1zM6 20h1v1h-1zM8 20h1v1h-1zM11 20h3v1h-3zM16 20h3v1h-3zM20 20h7v1h-7zM8 21h3v1h-3zM12 21h3v1h-3zM16 21h1v1h-1zM18 21h1v1h-1zM20 21h1v1h-1zM24 21h5v1h-5zM0 22h7v1h-7zM10 22h4v1h-4zM16 22h1v1h-1zM18 22h3v1h-3zM22 22h1v1h-1zM24 22h2v1h-2zM27 22h1v1h-1zM0 23h1v1h-1zM6 23h1v1h-1zM18 23h1v1h-1zM20 23h1v1h-1zM24 23h2v1h-2zM27 23h2v1h-2zM0 24h1v1h-1zM2 24h3v1h-3zM6 24h1v1h-1zM10 24h1v1h-1zM12 24h1v1h-1zM14 24h2v1h-2zM17 24h1v1h-1zM20 24h5v1h-5zM26 24h2v1h-2zM0 25h1v1h-1zM2 25h3v1h-3zM6 25h1v1h-1zM8 25h2v1h-2zM11 25h2v1h-2zM14 25h3v1h-3zM19 25h3v1h-3zM23 25h3v1h-3zM28 25h1v1h-1zM0 26h1v1h-1zM2 26h3v1h-3zM6 26h1v1h-1zM8 26h2v1h-2zM11 26h1v1h-1zM13 26h1v1h-1zM16 26h1v1h-1zM19 26h2v1h-2zM22 26h2v1h-2zM26 26h1v1h-1zM28 26h1v1h-1zM0 27h1v1h-1zM6 27h1v1h-1zM8 27h2v1h-2zM11 27h1v1h-1zM14 27h1v1h-1zM16 27h1v1h-1zM20 27h2v1h-2zM25 27h1v1h-1zM27 27h1v1h-1zM0 28h7v1h-7zM8 28h2v1h-2zM12 28h1v1h-1zM14 28h2v1h-2zM18 28h3v1h-3zM22 28h2v1h-2zM27 28h1v1h-1z" fill="#000"/><rect x="2" y="2" width="3" height="3" fill="#08b63a"/><rect x="24" y="2" width="3" height="3" fill="#0450a2"/><rect x="2" y="24" width="3" height="3" fill="#cc1f1f"/></svg>
</div>
</body></html>
